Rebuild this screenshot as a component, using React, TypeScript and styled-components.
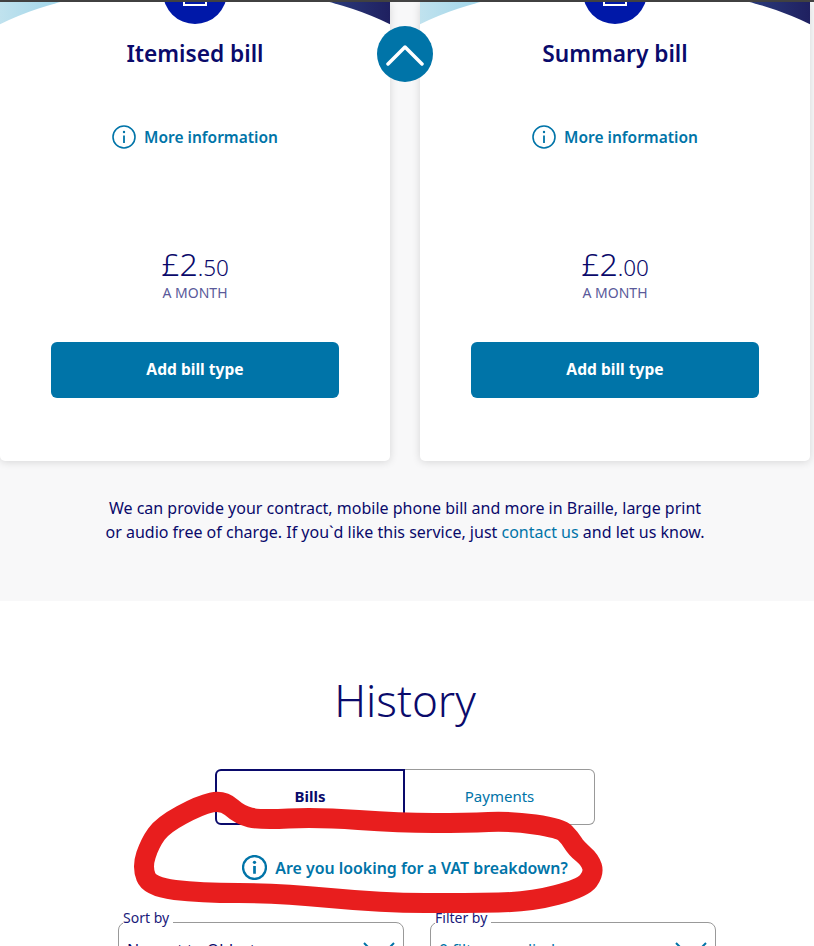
import React from "react";
import styled, { createGlobalStyle } from "styled-components";

const GlobalStyle = createGlobalStyle`
  html, body {
    margin: 0;
    padding: 0;
    background: #ffffff;
    font-family: "Noto Sans", "Open Sans", sans-serif;
    color: #0a0a6b;
  }
`;

const Page = styled.div`
  position: relative;
  width: 814px;
  height: 946px;
  overflow: hidden;
  background: #ffffff;
`;

const TopLine = styled.div`
  height: 2px;
  background: #444444;
`;

const PlansSection = styled.section`
  background: #f8f8f9;
  height: 599px;
`;

const PlanRow = styled.div`
  position: relative;
  display: flex;
  gap: 30px;
  width: 810px;
`;

const PlanCard = styled.article`
  position: relative;
  width: 390px;
  height: 459px;
  background: #ffffff;
  border-radius: 0 0 5px 5px;
  box-shadow: 0 1px 8px rgba(0, 0, 0, 0.14);
  overflow: hidden;
  display: flex;
  flex-direction: column;
  align-items: center;
`;

const CardCurve = styled.div`
  position: absolute;
  top: 0;
  left: 0;
  right: 0;
  height: 30px;
  overflow: hidden;
  background: linear-gradient(90deg, #c0e2ee 0%, #9fd5e9 16%, #5b7fb0 50%, #2a3a7a 85%, #1f2060 100%);

  &::after {
    content: "";
    position: absolute;
    left: -55px;
    top: -16px;
    width: 500px;
    height: 204px;
    border-radius: 50%;
    background: #ffffff;
  }
`;

const BadgeCircle = styled.div`
  position: absolute;
  top: -42px;
  left: 163px;
  width: 64px;
  height: 64px;
  border-radius: 50%;
  background: #0018a8;

  &::after {
    content: "";
    position: absolute;
    left: 20px;
    top: 42px;
    width: 24px;
    height: 4px;
    box-sizing: border-box;
    border: 2px solid #ffffff;
    border-top: 0;
  }
`;

const PlanTitle = styled.h2`
  margin: 36px 0 0;
  font-size: 22.7px;
  line-height: 32px;
  font-weight: 600;
  color: #0a0a6b;
`;

const InfoLink = styled.a`
  display: flex;
  align-items: center;
  gap: 8px;
  color: #0074a8;
  font-weight: 600;
  font-size: 15.5px;
  line-height: 24px;
  text-decoration: none;
`;

const CardInfo = styled(InfoLink)`
  margin-top: 55px;
`;

const Price = styled.div`
  margin-top: 95px;
  line-height: 40px;
  font-size: 32px;
  font-weight: 300;
  color: #0a0a6b;

  small {
    font-size: 22.5px;
  }
`;

const PriceNote = styled.div`
  font-size: 14px;
  line-height: 18px;
  margin-top: -4px;
  color: #5a5a9a;
`;

const AddButton = styled.button`
  margin-top: 40px;
  width: 288px;
  height: 56px;
  padding: 0 0 2px;
  border: 0;
  border-radius: 6px;
  background: #0074a8;
  color: #ffffff;
  font-family: inherit;
  font-size: 15.6px;
  font-weight: 700;
`;

const ScrollTop = styled.button`
  position: absolute;
  left: 377px;
  top: 24px;
  width: 56px;
  height: 56px;
  padding: 0;
  border: 0;
  border-radius: 50%;
  background: #0074a8;
  display: flex;
  align-items: center;
  justify-content: center;
`;

const Notice = styled.p`
  width: 810px;
  margin: 35px 0 0;
  text-align: center;
  font-size: 16px;
  line-height: 24px;
  color: #0a0a6b;

  a {
    color: #0074a8;
    text-decoration: none;
  }
`;

const HistorySection = styled.section`
  width: 810px;
  display: flex;
  flex-direction: column;
  align-items: center;
`;

const HistoryTitle = styled.h1`
  margin: 67px 0 0;
  font-size: 44px;
  line-height: 64px;
  font-weight: 300;
  color: #0a0a6b;
`;

const Tabs = styled.div`
  display: flex;
  margin-top: 37px;
  width: 380px;
  height: 56px;
`;

const Tab = styled.button<{ $active?: boolean; $side: "left" | "right" }>`
  flex: none;
  width: 50%;
  padding: 0 0 2px;
  background: #ffffff;
  font-family: inherit;
  font-size: 15px;
  font-weight: ${(p) => (p.$active ? 700 : 400)};
  color: ${(p) => (p.$active ? "#0a0a6b" : "#0074a8")};
  border: ${(p) => (p.$active ? "2px solid #0a0a6b" : "1px solid #999999")};
  border-left-width: ${(p) => (p.$active ? "2px" : "0")};
  border-radius: ${(p) => (p.$side === "left" ? "6px 0 0 6px" : "0 6px 6px 0")};
`;

const VatLink = styled(InfoLink)`
  margin-top: 30px;
  font-size: 15.9px;
`;

const Filters = styled.div`
  display: flex;
  gap: 26px;
  margin: 34px 0 0 24px;
`;

const FilterBox = styled.fieldset`
  margin: 0;
  padding: 9px 8px 0;
  width: 286px;
  height: 60px;
  box-sizing: border-box;
  border: 1px solid #999999;
  border-radius: 8px;
  display: flex;
  justify-content: space-between;
  font-size: 16px;

  legend {
    position: relative;
    top: -4px;
    padding: 0 4px 0 0;
    margin-left: -4px;
    font-size: 14px;
    line-height: 16px;
    color: #1a1a7a;
  }
`;

const FilterValue = styled.span<{ $link?: boolean }>`
  color: ${(p) => (p.$link ? "#0074a8" : "#0a0a6b")};
`;

const ChevronIcon = styled.svg`
  margin-top: 3px;
`;

const Scribble = styled.svg`
  position: absolute;
  left: 0;
  top: 0;
  pointer-events: none;
`;

function InfoIcon({ size, heavy }: { size: number; heavy?: boolean }) {
  return (
    <svg width={size} height={size} viewBox="0 0 24 24" fill="none" stroke="#0074a8">
      <circle cx="12" cy="12" r="11" strokeWidth={heavy ? 2.2 : 1.6} />
      <path d="M12 10.5V18" strokeWidth={heavy ? 2.6 : 1.8} />
      <circle cx="12" cy="7" r={heavy ? 1.6 : 1.2} fill="#0074a8" stroke="none" />
    </svg>
  );
}

function Chevron() {
  return (
    <ChevronIcon width="32" height="18" viewBox="0 0 32 18" fill="none" stroke="#0074a8" strokeWidth="2">
      <path d="M1 1l15 15L31 1" />
    </ChevronIcon>
  );
}

function Plan({ title, pence }: { title: string; pence: string }) {
  return (
    <PlanCard>
      <CardCurve />
      <BadgeCircle />
      <PlanTitle>{title}</PlanTitle>
      <CardInfo href="#">
        <InfoIcon size={24} />
        More information
      </CardInfo>
      <Price>
        £2<small>.{pence}</small>
      </Price>
      <PriceNote>A MONTH</PriceNote>
      <AddButton>Add bill type</AddButton>
    </PlanCard>
  );
}

// the red marker loop somebody drew on the screenshot
const scribblePoints: Array<[number, number]> = [
  [223, 800], [240, 815], [260, 820], [317, 817], [400, 823], [467, 823], [510, 821],
  [560, 828], [570, 838], [576, 848], [590, 860], [594, 873], [583, 888], [530, 902],
  [467, 903], [383, 903], [277, 893], [200, 893], [150, 887], [142, 867], [150, 843],
  [163, 825], [200, 805],
];

function scribblePath(points: Array<[number, number]>) {
  const mid = (a: [number, number], b: [number, number]) => `${(a[0] + b[0]) / 2} ${(a[1] + b[1]) / 2}`;
  let d = `M${mid(points[points.length - 1], points[0])}`;
  points.forEach((pt, i) => {
    d += `Q${pt[0]} ${pt[1]} ${mid(pt, points[(i + 1) % points.length])}`;
  });
  return d + "Z";
}

export default function App() {
  return (
    <Page>
      <GlobalStyle />
      <TopLine />
      <PlansSection>
        <PlanRow>
          <Plan title="Itemised bill" pence="50" />
          <Plan title="Summary bill" pence="00" />
          <ScrollTop aria-label="Back to top">
            <svg width="40" height="24" viewBox="0 0 40 24" fill="none" stroke="#ffffff" strokeWidth="3.5" strokeLinecap="round" strokeLinejoin="round">
              <path d="M3 22L20 5l17 17" />
            </svg>
          </ScrollTop>
        </PlanRow>
        <Notice>
          We can provide your contract, mobile phone bill and more in Braille, large print
          <br />
          or audio free of charge. If you`d like this service, just <a href="#">contact us</a> and let us know.
        </Notice>
      </PlansSection>
      <HistorySection>
        <HistoryTitle>History</HistoryTitle>
        <Tabs>
          <Tab $active $side="left">Bills</Tab>
          <Tab $side="right">Payments</Tab>
        </Tabs>
        <VatLink href="#">
          <InfoIcon size={25} heavy />
          Are you looking for a VAT breakdown?
        </VatLink>
        <Filters>
          <FilterBox>
            <legend>Sort by</legend>
            <FilterValue>Newest to Oldest</FilterValue>
            <Chevron />
          </FilterBox>
          <FilterBox>
            <legend>Filter by</legend>
            <FilterValue $link>0 filters applied</FilterValue>
            <Chevron />
          </FilterBox>
        </Filters>
      </HistorySection>
      <Scribble width="814" height="946" viewBox="0 0 814 946" fill="none">
        <path
          d={scribblePath(scribblePoints)}
          stroke="#e81e1e"
          strokeWidth="20"
          strokeLinecap="round"
          strokeLinejoin="round"
        />
      </Scribble>
    </Page>
  );
}
